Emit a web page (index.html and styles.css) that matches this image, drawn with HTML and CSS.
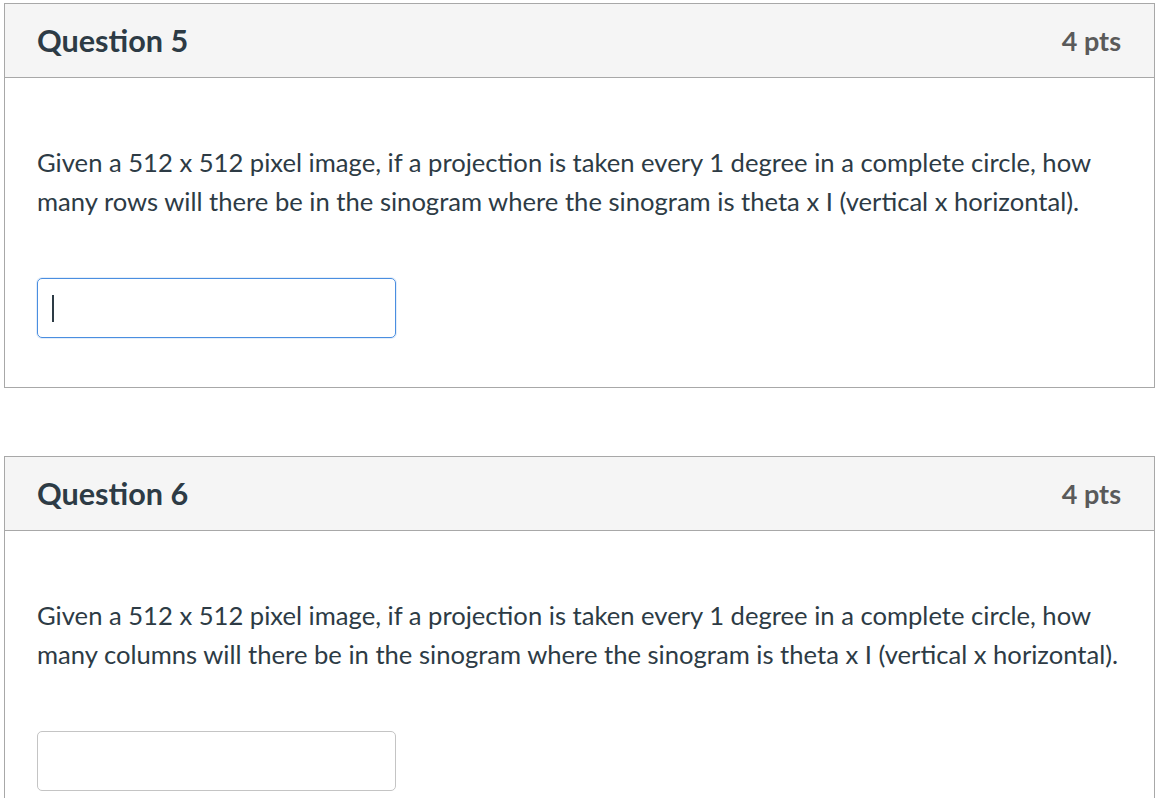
FILE: index.html
```html
<!DOCTYPE html>
<html>
<head>
<meta charset="utf-8">
<link rel="stylesheet" href="styles.css">
</head>
<body>
<div class="page">
  <div class="question">
    <div class="q-header">
      <span class="q-title">Question 5</span>
      <span class="q-pts">4 pts</span>
    </div>
    <div class="q-body">
      <p class="q-text">Given a 512 x 512 pixel image, if a projection is taken every 1 degree in a complete circle, how many rows will there be in the sinogram where the sinogram is theta x I (vertical x horizontal).</p>
      <div class="answer focused"><span class="caret"></span></div>
    </div>
  </div>
  <div class="question">
    <div class="q-header">
      <span class="q-title">Question 6</span>
      <span class="q-pts">4 pts</span>
    </div>
    <div class="q-body">
      <p class="q-text">Given a 512 x 512 pixel image, if a projection is taken every 1 degree in a complete circle, how many columns will there be in the sinogram where the sinogram is theta x I (vertical x horizontal).</p>
      <div class="answer"></div>
    </div>
  </div>
</div>
</body>
</html>
```

FILE: styles.css
```css
html, body {
  margin: 0;
  padding: 0;
  background: #ffffff;
}
body {
  font-family: Lato, "Open Sans", sans-serif;
  color: #2d3b45;
  overflow: hidden;
}
.page {
  padding: 3px 3px 0 4px;
  display: flex;
  flex-direction: column;
  gap: 68px;
}
.question {
  border: 1px solid #a8a8a8;
  background: #fff;
}
.q-header {
  height: 73px;
  background: #f5f5f5;
  border-bottom: 1px solid #a8a8a8;
  display: flex;
  align-items: center;
  justify-content: space-between;
  padding: 0 33px 0 32px;
}
.q-title {
  font-size: 30.6px;
  font-weight: 700;
  color: #2d3b45;
}
.q-pts {
  font-size: 27px;
  font-weight: 700;
  color: #5a5a5a;
}
.q-body {
  padding: 65px 32px 49px 32px;
}
.q-text {
  margin: 0;
  font-size: 25.62px;
  line-height: 39px;
  color: #2d3b45;
}
.answer {
  margin-top: 57px;
  width: 359px;
  height: 60px;
  border: 1px solid #c4c4c4;
  border-radius: 5px;
  display: flex;
  align-items: center;
  padding-left: 14px;
  box-sizing: border-box;
}
.answer.focused {
  border-color: #4a8ee0;
  box-shadow: 0 0 0 1px rgba(74, 142, 224, 0.15);
}
.caret {
  display: block;
  width: 2px;
  height: 27px;
  background: #2d3b45;
}
```
